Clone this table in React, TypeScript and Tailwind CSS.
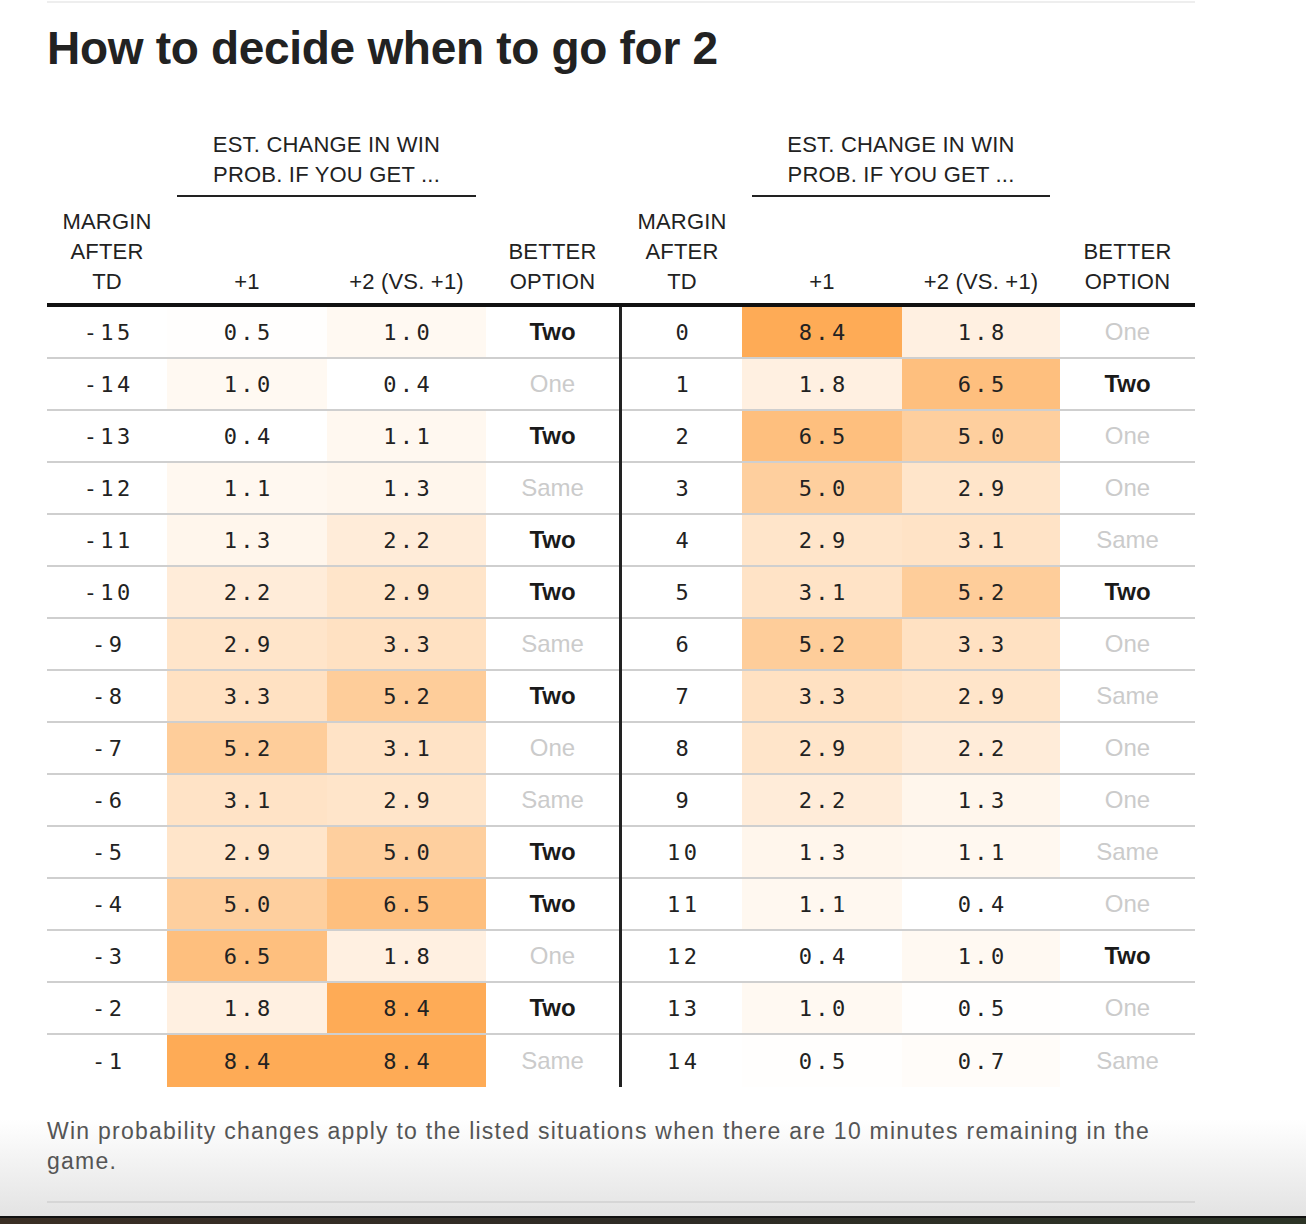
import React from "react";

type Row = { margin: number; one: number; two: number; better: "One" | "Two" | "Same" };

const leftRows: Row[] = [
  { margin: -15, one: 0.5, two: 1.0, better: "Two" },
  { margin: -14, one: 1.0, two: 0.4, better: "One" },
  { margin: -13, one: 0.4, two: 1.1, better: "Two" },
  { margin: -12, one: 1.1, two: 1.3, better: "Same" },
  { margin: -11, one: 1.3, two: 2.2, better: "Two" },
  { margin: -10, one: 2.2, two: 2.9, better: "Two" },
  { margin: -9, one: 2.9, two: 3.3, better: "Same" },
  { margin: -8, one: 3.3, two: 5.2, better: "Two" },
  { margin: -7, one: 5.2, two: 3.1, better: "One" },
  { margin: -6, one: 3.1, two: 2.9, better: "Same" },
  { margin: -5, one: 2.9, two: 5.0, better: "Two" },
  { margin: -4, one: 5.0, two: 6.5, better: "Two" },
  { margin: -3, one: 6.5, two: 1.8, better: "One" },
  { margin: -2, one: 1.8, two: 8.4, better: "Two" },
  { margin: -1, one: 8.4, two: 8.4, better: "Same" },
];

const rightRows: Row[] = [
  { margin: 0, one: 8.4, two: 1.8, better: "One" },
  { margin: 1, one: 1.8, two: 6.5, better: "Two" },
  { margin: 2, one: 6.5, two: 5.0, better: "One" },
  { margin: 3, one: 5.0, two: 2.9, better: "One" },
  { margin: 4, one: 2.9, two: 3.1, better: "Same" },
  { margin: 5, one: 3.1, two: 5.2, better: "Two" },
  { margin: 6, one: 5.2, two: 3.3, better: "One" },
  { margin: 7, one: 3.3, two: 2.9, better: "Same" },
  { margin: 8, one: 2.9, two: 2.2, better: "One" },
  { margin: 9, one: 2.2, two: 1.3, better: "One" },
  { margin: 10, one: 1.3, two: 1.1, better: "Same" },
  { margin: 11, one: 1.1, two: 0.4, better: "One" },
  { margin: 12, one: 0.4, two: 1.0, better: "Two" },
  { margin: 13, one: 1.0, two: 0.5, better: "One" },
  { margin: 14, one: 0.5, two: 0.7, better: "Same" },
];

// white -> orange heat scale
const heat = (v: number) => {
  const t = Math.min(1, Math.max(0, (v - 0.4) / 8));
  const r = Math.round(255 - t * 1);
  const g = Math.round(255 - t * 84);
  const b = Math.round(255 - t * 169);
  return `rgb(${r}, ${g}, ${b})`;
};

const mono = "font-['DejaVu_Sans_Mono',monospace] text-[22px] tracking-[3.5px] pl-[3.5px] text-[#222]";
const head = "text-center text-[22px] leading-[30px] tracking-[0.2px] text-[#222]";

function Half({ rows, cols, right }: { rows: Row[]; cols: string; right?: boolean }) {
  return (
    <div className="flex flex-col">
      {/* Header */}
      <div className={`grid ${cols} border-b-4 border-[#111] pb-[6px] ${right ? "pl-[3px]" : ""}`}>
        <div className={`col-start-2 col-span-2 mx-[10px] border-b-2 border-[#222] pb-[5px] ${head}`}>
          EST. CHANGE IN WIN
          <br />
          PROB. IF YOU GET ...
        </div>
        <div className={`col-start-1 mt-[10px] self-end ${head}`}>
          MARGIN
          <br />
          AFTER
          <br />
          TD
        </div>
        <div className={`self-end ${head}`}>+1</div>
        <div className={`self-end ${head}`}>+2 (VS. +1)</div>
        <div className={`self-end ${head}`}>
          BETTER
          <br />
          OPTION
        </div>
      </div>

      {/* Body */}
      <div className={right ? "border-l-[3px] border-[#222]" : ""}>
        {rows.map((r) => (
          <div key={r.margin} className={`grid ${cols} h-[52px] border-b-2 border-[#cfcfcf] last:border-b-0`}>
            <div className={`flex items-center justify-center ${mono}`}>{r.margin}</div>
            <div className={`flex items-center justify-center ${mono}`} style={{ backgroundColor: heat(r.one) }}>
              {r.one.toFixed(1)}
            </div>
            <div className={`flex items-center justify-center ${mono}`} style={{ backgroundColor: heat(r.two) }}>
              {r.two.toFixed(1)}
            </div>
            <div
              className={`flex items-center justify-center text-[24px] ${
                r.better === "Two" ? "font-bold text-[#1a1a1a]" : "text-[#cbcbcb]"
              }`}
            >
              {r.better}
            </div>
          </div>
        ))}
      </div>
    </div>
  );
}

export default function App() {
  return (
    <div className="w-[1306px] h-[1224px] flex flex-col bg-white font-['Liberation_Sans',Arial,sans-serif] overflow-hidden">
      <main className="px-[47px] pr-[111px] pt-[1px]">
        <div className="h-[2px] bg-[#eeeeee]" />
        <h1 className="mt-[22px] text-[46px] leading-[46px] font-bold tracking-[-0.3px] text-[#222]">
          How to decide when to go for 2
        </h1>

        <div className="mt-[59px] flex">
          <Half rows={leftRows} cols="grid-cols-[120px_160px_159px_133px]" />
          <Half rows={rightRows} cols="grid-cols-[120px_160px_158px_135px]" right />
        </div>
      </main>

      <footer className="flex-1 bg-linear-to-b from-white from-[25%] to-[#e3e3e3] px-[47px] pr-[111px] pt-[29px]">
        <p className="max-w-[1148px] text-[23px] leading-[30px] tracking-[1.25px] text-[#555]">
          Win probability changes apply to the listed situations when there are 10 minutes remaining in the game.
        </p>
        <div className="mt-[25px] h-[2px] bg-[#d6d6d6]" />
      </footer>
      <div className="h-[8px] border-t-2 border-[#111] bg-linear-to-r from-[#3a2e24] via-[#2e2b25] to-[#2c3426]" />
    </div>
  );
}
